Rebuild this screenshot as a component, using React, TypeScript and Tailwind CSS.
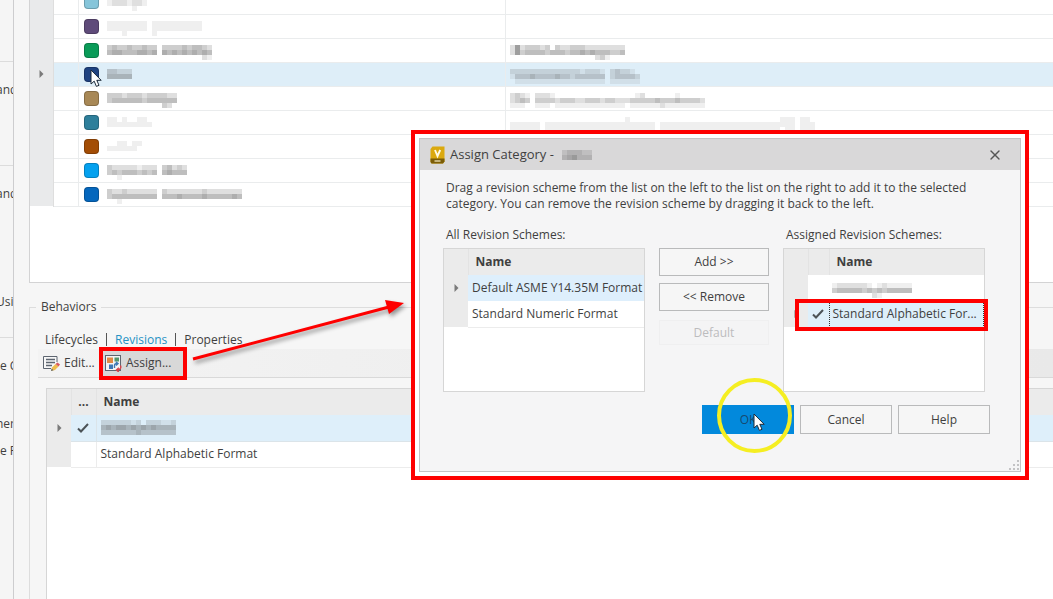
import type { ReactNode } from 'react';
import { X } from 'lucide-react';

interface Category {
  color: string;
  name: string[];
  description?: string[];
  selected?: boolean;
}

// Hidden names are kept as rows of shade levels, one character per mosaic cell
const categories: Category[] = [
  { color: 'bg-[#86c5da]', name: ['12221221', '12221221', '00000100'] },
  { color: 'bg-[#5f4b7a]', name: ['1111111101111111111', '1111111101111111111', '0001000001000000000'] },
  {
    color: 'bg-[#0a9b58]',
    name: ['343343343303333434432', '455444554505454545454', '000000000000000000021'],
    description: ['26233323032233322222222', '26344443444344545444334', '00000000000000000231000'],
  },
  {
    color: 'bg-[#1f4280]',
    selected: true,
    name: ['33222', '44444', '00000'],
    description: ['222222222222221222102322100', '133343333433233333302333320', '011111111111111111101111110'],
  },
  {
    color: 'bg-[#a88856]',
    name: ['33323332333322', '34444443444444', '00000000000320'],
    description: ['2321022210000000000000000120000001000000', '2343033332333223332332223333343334333320', '1110011101111111111111101111112111111110'],
  },
  {
    color: 'bg-[#2e7f9b]',
    name: ['110100110', '111111111', '000000000'],
    description: [
      '0000000000000000000000010000000000000000000000000000001110110',
      '1111110111111111111111111111101111111111111111111111111110111',
      '1111110111111111111111111111101111111111111111111111110110111',
    ],
  },
  { color: 'bg-[#a34d05]', name: ['0011011', '1111110', '0000000'] },
  { color: 'bg-[#04a1ef]', name: ['3222221222034232', '3434443434045444', '0010000000000000'] },
  { color: 'bg-[#0567bd]', name: ['322322222203222222232222222', '344444444404445444454444454', '001000000000000000000000000'] },
];

function Mosaic({ rows }: { rows: string[] }) {
  const width = rows[0].length * 5;
  return (
    <svg width={width} height={rows.length * 5} shapeRendering="crispEdges" aria-hidden="true">
      {rows.flatMap((row, y) =>
        row.split('').map((level, x) => (
          <rect
            key={`${x}-${y}`}
            x={x * 5}
            y={y * 5}
            width="5"
            height="5"
            fill="#4d4d4d"
            fillOpacity={Number(level) / 11}
          />
        )),
      )}
    </svg>
  );
}

function RowMarker() {
  return (
    <svg width="5" height="8" viewBox="0 0 5 8" className="mx-auto" aria-hidden="true">
      <path d="M0.5 0L4.5 4L0.5 8Z" fill="#7a7a7a" />
    </svg>
  );
}

function CheckMark() {
  return (
    <svg width="12" height="10" viewBox="0 0 12 10" className="mx-auto" aria-hidden="true">
      <path d="M1 5.5L4 8.5L11 1" fill="none" stroke="#4c5357" strokeWidth="2" />
    </svg>
  );
}

function Cursor({ className }: { className: string }) {
  return (
    <svg width="13" height="19" viewBox="0 0 13 19" className={`absolute ${className}`} aria-hidden="true">
      <path
        d="M1 1V15L4.2 12.2L6.4 17.4L9 16.3L6.8 11.3H11.2Z"
        fill="#fff"
        stroke="#1d2b3a"
        strokeWidth="1"
      />
    </svg>
  );
}

function EditIcon() {
  return (
    <svg width="17" height="17" viewBox="0 0 17 17" className="shrink-0" aria-hidden="true">
      <rect x="1" y="1" width="13" height="13" fill="#f7f7f7" />
      <path d="M14 7V1.5H0.5V13.5H8" fill="none" stroke="#5d6570" />
      <path d="M3 4.5H12M3 7.5H12M3 10.5H9" stroke="#5d6570" strokeWidth="1.4" />
      <path d="M8 16L9 12.5L12.5 9L15.5 11.5L12 15Z" fill="#efbd4d" />
      <path d="M12.5 9L14.5 7.4L17 9.6L15.5 11.5Z" fill="#d8595e" />
      <path d="M8 16L8.7 13.5L10.5 15.3Z" fill="#5d6570" />
    </svg>
  );
}

function AssignIcon() {
  return (
    <svg width="17" height="17" viewBox="0 0 17 17" className="shrink-0" aria-hidden="true">
      <rect x="0.5" y="0.5" width="15" height="15" fill="#f4f4f4" stroke="#5d6570" />
      <rect x="2" y="2.5" width="6" height="5.5" fill="#e08a45" />
      <rect x="9.5" y="2.5" width="4.5" height="4" fill="#52966c" />
      <rect x="4" y="9.5" width="4" height="4.5" fill="#3d78b4" />
      <path d="M9.5 13V10.5C9.5 9.5 10 8.5 12 8.5M10.8 6.8L13 8.5L11 10.5" fill="none" stroke="#3d78b4" strokeWidth="1.4" />
      <path d="M15.5 10.5C16.5 13 15 15 12.5 15M13.8 12.8L11.5 15L13.8 17" fill="none" stroke="#d8434b" strokeWidth="1.4" />
    </svg>
  );
}

function VaultIcon() {
  return (
    <svg width="15" height="18" viewBox="0 0 15 18" aria-hidden="true">
      <path d="M2.5 0.5H14.5V15.5L13 17.5H1.5L0.5 16V3Z" fill="#dba90f" />
      <path d="M0.5 12.5H14.5V15.5L13 17.5H1.5L0.5 16Z" fill="#7b5d08" />
      <path d="M5 4L7.5 10L10.2 4" fill="none" stroke="#fffbe8" strokeWidth="1.9" />
      <path d="M4.5 15H10.5" stroke="#e6d9ab" strokeWidth="1.4" />
    </svg>
  );
}

function DialogButton({ children, className = '' }: { children: ReactNode; className?: string }) {
  return (
    <button type="button" className={`h-7 border border-[#b9babb] bg-[#f6f6f6] ${className}`}>
      {children}
    </button>
  );
}

function SidePanel() {
  return (
    <aside className="w-[14px] shrink-0 overflow-hidden border-r border-[#cdcdcf] bg-[#f5f5f5] leading-4 whitespace-nowrap">
      <div className="h-[62px] border-b border-[#dcdcdc]" />
      <div className="h-[104px] border-b border-[#dcdcdc] pt-5">
        <div className="-ml-1">and</div>
      </div>
      <div className="h-[172px] border-b border-[#dcdcdc] pt-5">
        <div className="-ml-1">and</div>
        <div className="-ml-1 pt-[92px]">Using</div>
      </div>
      <div className="pt-5">e C</div>
      <div className="-ml-1 pt-[42px]">ner</div>
      <div className="pt-[11px]">e F</div>
    </aside>
  );
}

function CategoryTable() {
  return (
    <div className="h-[283px] overflow-hidden border-b border-l border-[#d3d3d4] bg-white">
      <table className="-mt-[10px] w-full table-fixed border-collapse">
        <colgroup>
          <col className="w-[23px]" />
          <col className="w-[25px]" />
          <col className="w-[27px]" />
          <col className="w-[400px]" />
          <col />
        </colgroup>
        <tbody>
          {categories.map(({ color, name, description, selected }) => (
            <tr key={color} className={`h-6 ${selected ? 'bg-[#deeef8]' : ''}`}>
              <td className="border-r border-[#dedede] bg-[#e9eaeb] p-0">{selected && <RowMarker />}</td>
              <td className="border-r border-b border-[#eaeced] p-0" />
              <td className="border-b border-[#eaeced] p-0">
                <div className={`relative ml-[5px] size-[15px] rounded border border-black/20 ${color}`}>
                  {selected && <Cursor className="top-[1px] left-[5px]" />}
                </div>
              </td>
              <td className="border-r border-b border-[#eaeced] p-0 pl-0.5">
                <div className="flex pt-1">
                  <Mosaic rows={name} />
                </div>
              </td>
              <td className="border-b border-[#eaeced] p-0 pl-1">
                {description && (
                  <div className="flex pt-1">
                    <Mosaic rows={description} />
                  </div>
                )}
              </td>
            </tr>
          ))}
        </tbody>
      </table>
    </div>
  );
}

function Behaviors() {
  return (
    <fieldset className="mt-4 flex min-w-0 grow flex-col border-t border-l border-[#dddddd]">
      <legend className="ml-1.5 px-[5px] leading-4">Behaviors</legend>
      <div className="mt-[15px] flex h-[19px] items-center gap-2 pl-[15px]">
        <button type="button">Lifecycles</button>
        <span className="h-[13px] w-px bg-[#555]" />
        <button type="button" className="text-[#2592c4]">Revisions</button>
        <span className="h-[13px] w-px bg-[#555]" />
        <button type="button">Properties</button>
      </div>
      <div className="ml-2 flex h-[29px] items-center border-b border-[#d9d9d9] bg-linear-to-r from-[#f3f3f3] to-[#e9e9e9] pl-[5px]">
        <button type="button" className="flex w-14 items-center gap-1">
          <EditIcon />
          Edit...
        </button>
        <button
          type="button"
          className="flex h-[33px] w-[88px] items-center gap-1 border-4 border-[#fe0000] bg-[#d8d8d8] pl-0.5"
        >
          <AssignIcon />
          Assign...
        </button>
      </div>
      <div className="mt-[10px] ml-4 grow border-t border-l border-[#d6d6d6] bg-white">
        <table className="w-full table-fixed border-collapse text-left">
          <colgroup>
            <col className="w-6" />
            <col className="w-[25px]" />
            <col />
          </colgroup>
          <thead>
            <tr className="h-[26px] bg-[#ebebeb]">
              <th className="border-r border-[#e3e3e3] p-0" />
              <th className="border-r border-[#e3e3e3] p-0 text-center">...</th>
              <th className="p-0 pl-[7px]">Name</th>
            </tr>
          </thead>
          <tbody>
            <tr className="h-[26px] bg-[#deeffa]">
              <td className="bg-[#ebebeb] p-0"><RowMarker /></td>
              <td className="border-r border-b border-[#dbe4e9] p-0"><CheckMark /></td>
              <td className="border-b border-[#dbe4e9] p-0 pl-1">
                <Mosaic rows={['222222120222112', '454554545454444', '333333343333333']} />
              </td>
            </tr>
            <tr className="h-[26px]">
              <td className="bg-[#ebebeb] p-0" />
              <td className="border-r border-b border-[#ececec] p-0" />
              <td className="border-b border-[#ececec] p-0 pl-1">Standard Alphabetic Format</td>
            </tr>
          </tbody>
        </table>
      </div>
    </fieldset>
  );
}

function AllSchemes() {
  return (
    <div className="h-[144px] border border-[#d6d6d6] bg-white">
      <table className="w-full table-fixed border-collapse text-left whitespace-nowrap">
        <colgroup>
          <col className="w-6" />
          <col />
        </colgroup>
        <thead>
          <tr className="h-[26px] bg-[#ebebeb]">
            <th className="border-r border-[#e3e3e3] p-0" />
            <th className="p-0 pl-[7px]">Name</th>
          </tr>
        </thead>
        <tbody>
          <tr className="h-[26px]">
            <td className="bg-[#ebebeb] p-0"><RowMarker /></td>
            <td className="bg-[#deeffc] p-0 pl-1">Default ASME Y14.35M Format</td>
          </tr>
          <tr className="h-[26px]">
            <td className="bg-[#ebebeb] p-0" />
            <td className="border-b border-[#ececec] p-0 pl-1">Standard Numeric Format</td>
          </tr>
        </tbody>
      </table>
    </div>
  );
}

function AssignedSchemes() {
  return (
    <div className="relative h-[144px] border border-[#d6d6d6] bg-white">
      <table className="w-full table-fixed border-collapse text-left whitespace-nowrap">
        <colgroup>
          <col className="w-6" />
          <col className="w-[21px]" />
          <col />
        </colgroup>
        <thead>
          <tr className="h-[26px] bg-[#ebebeb]">
            <th className="border-r border-[#e3e3e3] p-0" />
            <th className="border-r border-[#e3e3e3] p-0" />
            <th className="p-0 pl-[7px]">Name</th>
          </tr>
        </thead>
        <tbody>
          <tr className="h-[26px]">
            <td className="bg-[#ebebeb] p-0" />
            <td className="p-0" />
            <td className="p-0 pt-[5px] pl-[3px]">
              <Mosaic rows={['1222222101211111', '3444443434344444', '0000000021000000']} />
            </td>
          </tr>
          <tr className="h-[26px] bg-[#deeffa]">
            <td className="bg-[#ebebeb] p-0"><RowMarker /></td>
            <td className="p-0"><CheckMark /></td>
            <td className="border border-dotted border-[#333] p-0 pl-[3px]">Standard Alphabetic For...</td>
          </tr>
        </tbody>
      </table>
      <div className="absolute top-[50px] -right-1 left-[11px] h-8 border-4 border-[#fe0000]" />
    </div>
  );
}

function AssignCategoryDialog() {
  return (
    <div className="absolute top-[130px] left-[411px] w-[618px] border-4 border-[#fe0000] bg-white p-1">
      <section role="dialog" aria-label="Assign Category" className="relative border border-[#c4c4c6] bg-[#f5f5f6]">
        <header className="flex h-[31px] items-center bg-[#d9d8d9] pr-[17px] pl-[10px]">
          <VaultIcon />
          <h2 className="ml-[5px] text-[13px]">Assign Category -</h2>
          <span className="ml-2">
            <Mosaic rows={['233322', '345333']} />
          </span>
          <button type="button" aria-label="Close" className="ml-auto">
            <X size={16} strokeWidth={2} color="#555" />
          </button>
        </header>

        <div className="px-[23px] pb-[37px]">
          <p className="px-[3px] pt-[10px] leading-4">
            Drag a revision scheme from the list on the left to the list on the right to add it to the selected
            <br />
            category. You can remove the revision scheme by dragging it back to the left.
          </p>

          <div className="mt-[15px] flex gap-[14px] pr-[11px]">
            <div className="w-[202px]">
              <h3 className="mb-[5px] px-[3px] leading-4">All Revision Schemes:</h3>
              <AllSchemes />
            </div>
            <div className="flex w-[110px] flex-col gap-[7px] pt-[21px]">
              <DialogButton>Add &gt;&gt;</DialogButton>
              <DialogButton>&lt;&lt; Remove</DialogButton>
              <button type="button" disabled className="mt-0.5 h-[25px] border border-[#efeff0] bg-[#f4f4f5] text-[#bcbcbe]">
                Default
              </button>
            </div>
            <div className="w-[202px]">
              <h3 className="mb-[5px] px-[3px] leading-4">Assigned Revision Schemes:</h3>
              <AssignedSchemes />
            </div>
          </div>

          <div className="mt-[13px] flex justify-end gap-1.5 pr-[7px]">
            <button type="button" className="relative h-[29px] w-[92px] bg-[#0289dc] text-[#174a70]">
              OK
              <span className="absolute -top-[27px] left-[15px] size-[75px] rounded-full border-4 border-[#f5ee22]" />
              <Cursor className="top-2 left-[51px]" />
            </button>
            <DialogButton className="h-[29px] w-[92px]">Cancel</DialogButton>
            <DialogButton className="h-[29px] w-[92px]">Help</DialogButton>
          </div>
        </div>

        <svg width="11" height="11" viewBox="0 0 11 11" className="absolute right-0 bottom-0" aria-hidden="true">
          <path
            d="M8 0h2v2h-2zM4 4h2v2h-2zM8 4h2v2h-2zM0 8h2v2h-2zM4 8h2v2h-2zM8 8h2v2h-2z"
            fill="#c3c3c5"
          />
        </svg>
      </section>
    </div>
  );
}

function PointerArrow() {
  return (
    <svg
      width="220"
      height="72"
      viewBox="0 0 220 72"
      className="absolute top-[296px] left-[190px] drop-shadow-[2px_3px_2px_rgba(0,0,0,0.4)]"
      aria-hidden="true"
    >
      <path d="M3 63L199 11" stroke="#fe0000" strokeWidth="3" />
      <path d="M214 7L199 18L195 4Z" fill="#fe0000" />
    </svg>
  );
}

export default function App() {
  return (
    <div className="relative flex min-h-screen overflow-hidden bg-[#f6f6f6] font-['Open_Sans','Noto_Sans',sans-serif] text-[12px] text-[#3f3f3f]">
      <SidePanel />
      <main className="ml-[15px] flex min-w-0 grow flex-col">
        <CategoryTable />
        <Behaviors />
      </main>
      <PointerArrow />
      <AssignCategoryDialog />
    </div>
  );
}
